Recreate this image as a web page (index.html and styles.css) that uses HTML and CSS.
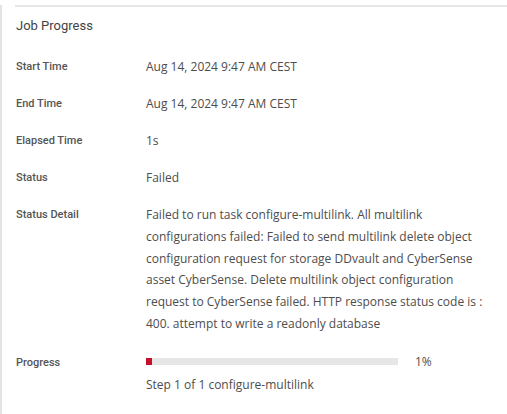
FILE: index.html
```html
<!DOCTYPE html>
<html>
<head>
<meta charset="utf-8">
<link rel="stylesheet" href="styles.css">
</head>
<body>
<div class="panel">
  <section class="card">
    <h2 class="title">Job Progress</h2>
    <dl class="rows">
      <div class="row"><dt>Start Time</dt><dd>Aug 14, 2024 9:47 AM CEST</dd></div>
      <div class="row"><dt>End Time</dt><dd>Aug 14, 2024 9:47 AM CEST</dd></div>
      <div class="row"><dt>Elapsed Time</dt><dd>1s</dd></div>
      <div class="row"><dt>Status</dt><dd>Failed</dd></div>
      <div class="row"><dt>Status Detail</dt><dd class="detail">Failed to run task configure-multilink. All multilink configurations failed: Failed to send multilink delete object configuration request for storage DDvault and CyberSense asset CyberSense. Delete multilink object configuration request to CyberSense failed. HTTP response status code is : 400. attempt to write a readonly database</dd></div>
      <div class="row progress-row"><dt>Progress</dt><dd>
        <div class="bar-line">
          <div class="bar"><div class="fill" style="width:6px"></div></div>
          <span class="pct">1%</span>
        </div>
        <div class="step">Step 1 of 1 configure-multilink</div>
      </dd></div>
    </dl>
  </section>
</div>
</body>
</html>
```

FILE: styles.css
```css
html, body {
  margin: 0;
  padding: 0;
  background: #fff;
}
body {
  font-family: Roboto, "Liberation Sans", sans-serif;
  color: #4a4a4a;
}
.panel {
  border-left: 2px solid #e3e3e3;
  min-height: 414px;
  box-sizing: border-box;
  padding-left: 13px;
}
.card {
  border-top: 2px solid #e6e6e6;
  margin-top: 5px;
  padding-left: 1px;
}
.title {
  margin: 0;
  padding-top: 9px;
  font-size: 13px;
  line-height: 20px;
  font-weight: 400;
  color: #444;
}
.rows {
  margin: 20px 0 0 0;
  display: flex;
  flex-direction: column;
  gap: 15px;
}
.row {
  display: grid;
  grid-template-columns: 130px 337px;
  line-height: 22px;
}
.row dt {
  color: #555;
  font-weight: 500;
  font-size: 11px;
}
.row dd {
  margin: 0;
  color: #4d4d4d;
  font-family: "Open Sans", "Noto Sans", sans-serif;
  font-size: 12px;
}
.detail {
  line-height: 21.8px;
}
.progress-row {
  margin-top: 2px;
}
.bar-line {
  display: flex;
  align-items: center;
  height: 20px;
}
.bar {
  width: 252px;
  height: 7px;
  background: #e6e6e6;
  flex: none;
}
.fill {
  height: 100%;
  background: #c8102e;
}
.pct {
  margin-left: 17px;
}
.step {
  line-height: 26px;
}
```
